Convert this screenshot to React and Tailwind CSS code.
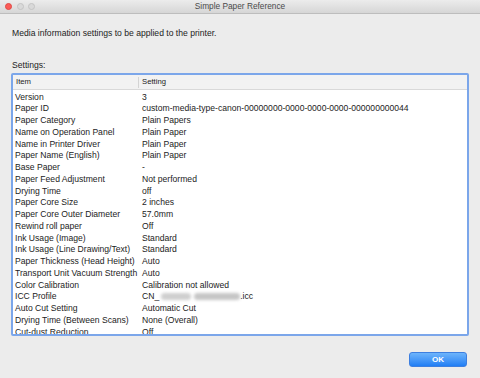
const rows = [
  ['Version', '3'],
  ['Paper ID', 'custom-media-type-canon-00000000-0000-0000-0000-000000000044'],
  ['Paper Category', 'Plain Papers'],
  ['Name on Operation Panel', 'Plain Paper'],
  ['Name in Printer Driver', 'Plain Paper'],
  ['Paper Name (English)', 'Plain Paper'],
  ['Base Paper', '-'],
  ['Paper Feed Adjustment', 'Not performed'],
  ['Drying Time', 'off'],
  ['Paper Core Size', '2 inches'],
  ['Paper Core Outer Diameter', '57.0mm'],
  ['Rewind roll paper', 'Off'],
  ['Ink Usage (Image)', 'Standard'],
  ['Ink Usage (Line Drawing/Text)', 'Standard'],
  ['Paper Thickness (Head Height)', 'Auto'],
  ['Transport Unit Vacuum Strength', 'Auto'],
  ['Color Calibration', 'Calibration not allowed'],
  ['ICC Profile', 'icc'],
  ['Auto Cut Setting', 'Automatic Cut'],
  ['Drying Time (Between Scans)', 'None (Overall)'],
  ['Cut-dust Reduction', 'Off'],
];

const IccValue = () => (
  <span className="flex items-center">
    <span>CN_</span>
    <span className="inline-block w-[30px] h-[7px] ml-[2px] bg-[#cfcfcf] blur-[1.5px] rounded-sm" />
    <span className="inline-block w-[46px] h-[7px] ml-[3px] bg-[#c6c6c6] blur-[1.5px] rounded-sm" />
    <span>.icc</span>
  </span>
);

const App = () => {
  return (
    <div
      className="w-[480px] h-[378px] bg-[#ececec] flex flex-col overflow-hidden text-[#1c1c1c]"
      style={{ fontFamily: '"Liberation Sans", Arial, sans-serif' }}
    >
      {/* Title bar */}
      <div className="relative h-[14px] shrink-0 bg-gradient-to-b from-[#ececec] to-[#d6d6d6] border-b border-[#bdbdbd] flex items-center justify-center">
        <div className="absolute left-[5px] top-[2.5px] flex gap-[4.5px]">
          <span className="w-[7px] h-[7px] rounded-full bg-[#fc5b57] border-[0.5px] border-[#de4a45]" />
          <span className="w-[7px] h-[7px] rounded-full bg-[#d9d9d9] border-[0.5px] border-[#c4c4c4]" />
          <span className="w-[7px] h-[7px] rounded-full bg-[#d9d9d9] border-[0.5px] border-[#c4c4c4]" />
        </div>
        <span className="text-[8.3px] leading-none text-[#4a4a4a]">Simple Paper Reference</span>
      </div>

      {/* Body */}
      <div className="flex flex-col flex-1 px-[11px]">
        <p className="text-[8.6px] leading-[12px] mt-[13px] pl-[1px]">
          Media information settings to be applied to the printer.
        </p>
        <p className="text-[8.6px] leading-[12px] mt-[20px] pl-[1px]">Settings:</p>

        {/* Table */}
        <div className="mt-[2px] h-[263px] border-2 border-[#7ba6ea] rounded-[2px] bg-white overflow-hidden flex flex-col">
          <div className="flex h-[15px] shrink-0 bg-[#f2f2f2] border-b border-[#d9d9d9] text-[7.7px] items-center">
            <div className="w-[126px] pl-[3px] border-r border-[#d4d4d4] h-[11px] flex items-center">Item</div>
            <div className="pl-[3px]">Setting</div>
          </div>
          <div className="flex-1 overflow-hidden text-[8.6px] pt-[1px]">
            {rows.map(([item, value]) => (
              <div key={item} className="flex h-[11.75px] items-center leading-none">
                <div className="w-[126px] pl-[2px] whitespace-nowrap">{item}</div>
                <div className="pl-[3px] whitespace-nowrap">
                  {item === 'ICC Profile' ? <IccValue /> : value}
                </div>
              </div>
            ))}
          </div>
        </div>

        {/* Footer */}
        <div className="flex justify-end mt-[16px] pr-[2px]">
          <button className="w-[58px] h-[15px] rounded-[3px] bg-gradient-to-b from-[#6db4fb] to-[#1f7ef4] border-[0.5px] border-[#3d7fe0] text-white text-[8px] font-bold leading-none flex items-center justify-center">
            OK
          </button>
        </div>
      </div>
    </div>
  );
};

export default App;
